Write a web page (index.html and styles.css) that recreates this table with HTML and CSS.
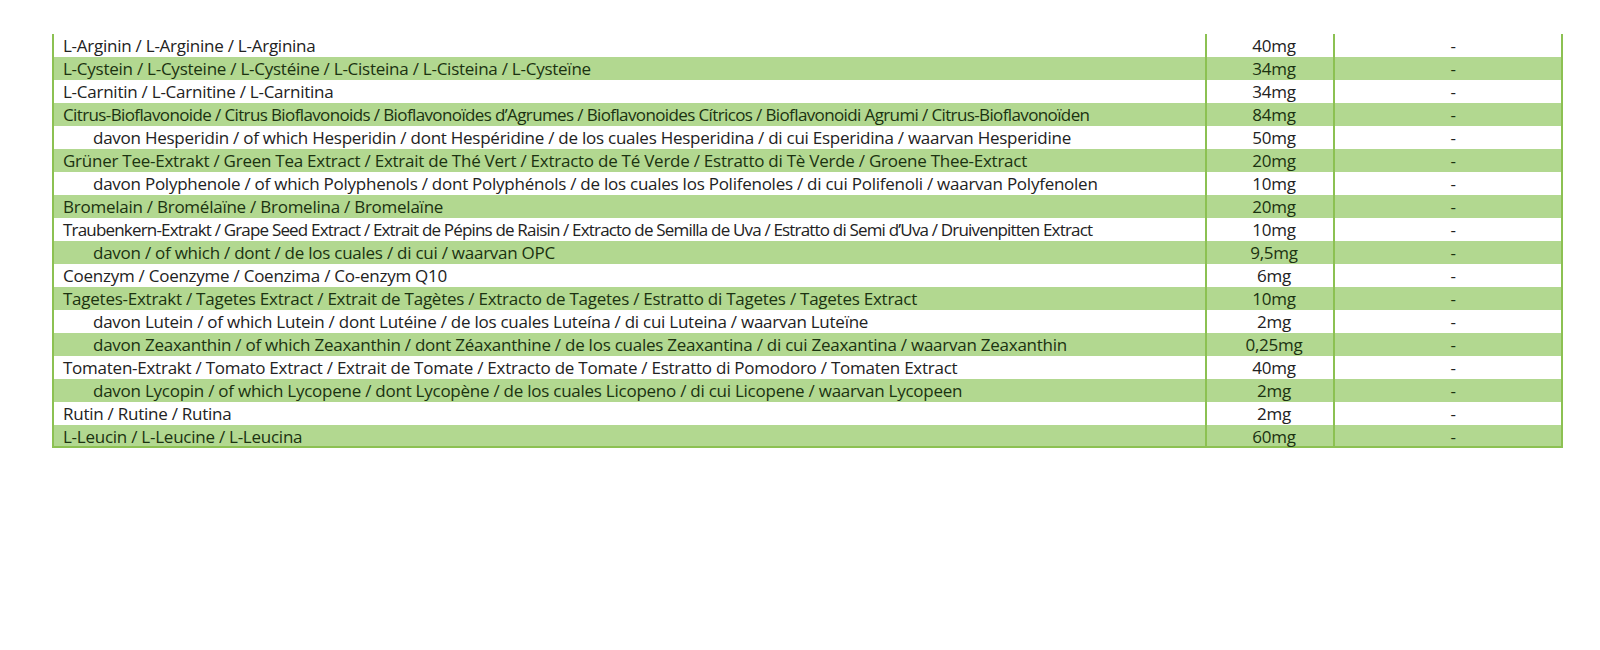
FILE: index.html
```html
<!DOCTYPE html>
<html>
<head>
<meta charset="utf-8">
<link rel="stylesheet" href="styles.css">
</head>
<body>
<div class="table">
  <div class="row"><div class="name">L-Arginin / L-Arginine / L-Arginina</div><div class="amt">40mg</div><div class="rv">-</div></div>
  <div class="row alt"><div class="name">L-Cystein / L-Cysteine / L-Cystéine / L-Cisteina / L-Cisteina / L-Cysteïne</div><div class="amt">34mg</div><div class="rv">-</div></div>
  <div class="row"><div class="name">L-Carnitin / L-Carnitine / L-Carnitina</div><div class="amt">34mg</div><div class="rv">-</div></div>
  <div class="row alt"><div class="name tight">Citrus-Bioflavonoide / Citrus Bioflavonoids / Bioflavonoïdes d’Agrumes / Bioflavonoides Cítricos / Bioflavonoidi Agrumi / Citrus-Bioflavonoïden</div><div class="amt">84mg</div><div class="rv">-</div></div>
  <div class="row"><div class="name sub">davon Hesperidin / of which Hesperidin / dont Hespéridine / de los cuales Hesperidina / di cui Esperidina / waarvan Hesperidine</div><div class="amt">50mg</div><div class="rv">-</div></div>
  <div class="row alt"><div class="name">Grüner Tee-Extrakt / Green Tea Extract / Extrait de Thé Vert / Extracto de Té Verde / Estratto di Tè Verde / Groene Thee-Extract</div><div class="amt">20mg</div><div class="rv">-</div></div>
  <div class="row"><div class="name sub">davon Polyphenole / of which Polyphenols / dont Polyphénols / de los cuales los Polifenoles / di cui Polifenoli / waarvan Polyfenolen</div><div class="amt">10mg</div><div class="rv">-</div></div>
  <div class="row alt"><div class="name">Bromelain / Bromélaïne / Bromelina / Bromelaïne</div><div class="amt">20mg</div><div class="rv">-</div></div>
  <div class="row"><div class="name tighter">Traubenkern-Extrakt / Grape Seed Extract / Extrait de Pépins de Raisin / Extracto de Semilla de Uva / Estratto di Semi d’Uva / Druivenpitten Extract</div><div class="amt">10mg</div><div class="rv">-</div></div>
  <div class="row alt"><div class="name sub">davon / of which / dont / de los cuales / di cui / waarvan OPC</div><div class="amt">9,5mg</div><div class="rv">-</div></div>
  <div class="row"><div class="name">Coenzym / Coenzyme / Coenzima / Co-enzym Q10</div><div class="amt">6mg</div><div class="rv">-</div></div>
  <div class="row alt"><div class="name">Tagetes-Extrakt / Tagetes Extract / Extrait de Tagètes / Extracto de Tagetes / Estratto di Tagetes / Tagetes Extract</div><div class="amt">10mg</div><div class="rv">-</div></div>
  <div class="row"><div class="name sub">davon Lutein / of which Lutein / dont Lutéine / de los cuales Luteína / di cui Luteina / waarvan Luteïne</div><div class="amt">2mg</div><div class="rv">-</div></div>
  <div class="row alt"><div class="name sub">davon Zeaxanthin / of which Zeaxanthin / dont Zéaxanthine / de los cuales Zeaxantina / di cui Zeaxantina / waarvan Zeaxanthin</div><div class="amt">0,25mg</div><div class="rv">-</div></div>
  <div class="row"><div class="name">Tomaten-Extrakt / Tomato Extract / Extrait de Tomate / Extracto de Tomate / Estratto di Pomodoro / Tomaten Extract</div><div class="amt">40mg</div><div class="rv">-</div></div>
  <div class="row alt"><div class="name sub">davon Lycopin / of which Lycopene / dont Lycopène / de los cuales Licopeno / di cui Licopene / waarvan Lycopeen</div><div class="amt">2mg</div><div class="rv">-</div></div>
  <div class="row"><div class="name">Rutin / Rutine / Rutina</div><div class="amt">2mg</div><div class="rv">-</div></div>
  <div class="row alt last"><div class="name">L-Leucin / L-Leucine / L-Leucina</div><div class="amt">60mg</div><div class="rv">-</div></div>
</div>
</body>
</html>
```
FILE: styles.css
```css
html, body {
  margin: 0;
  padding: 0;
  background: #ffffff;
}

body {
  font-family: "Open Sans", "Liberation Sans", Arial, sans-serif;
  font-size: 17px;
  letter-spacing: -0.25px;
  color: #222222;
}

.table {
  margin: 34px 0 0 52px;
  width: 1511px;
}

.row {
  display: grid;
  grid-template-columns: 1153px 128px 230px;
  height: 23px;
  background: #ffffff;
}

.row.alt {
  background: #b2d890;
  color: #1b3210;
}

.row.last {
  box-shadow: inset 0 -2px 0 #8cc152;
}

.row > div {
  box-sizing: border-box;
  height: 23px;
  line-height: 23px;
  white-space: nowrap;
  overflow: hidden;
}

.name {
  border-left: 2px solid #8cc152;
  padding-left: 9px;
}

.name.sub {
  padding-left: 39px;
}

.name.tight {
  letter-spacing: -0.62px;
}

.name.tighter {
  letter-spacing: -0.82px;
}

.amt {
  border-left: 2px solid #8cc152;
  text-align: center;
  padding-left: 8px;
}

.rv {
  border-left: 2px solid #8cc152;
  border-right: 2px solid #8cc152;
  text-align: center;
  padding-left: 10px;
}
```
